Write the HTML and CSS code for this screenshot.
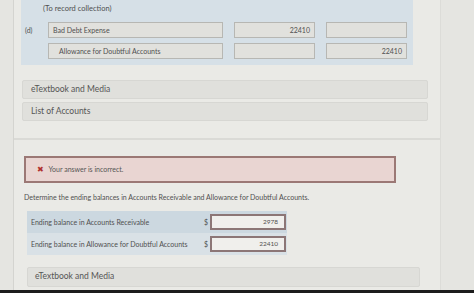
FILE: index.html
```html
<!DOCTYPE html>
<html lang="en">
<head>
  <meta charset="UTF-8">
  <title>Journal Entry</title>
  <link rel="stylesheet" href="styles.css">
</head>
<body>
  <div class="page">
    <div class="section top">
      <div class="entry">
        <div class="entry-title">(To record collection)</div>
        <div class="entry-row">
          <span class="entry-label">(d)</span>
          <div class="field account">Bad Debt Expense</div>
          <div class="field amount">22410</div>
          <div class="field amount"></div>
        </div>
        <div class="entry-row">
          <span class="entry-label"></span>
          <div class="field account indent">Allowance for Doubtful Accounts</div>
          <div class="field amount"></div>
          <div class="field amount">22410</div>
        </div>
      </div>
      <div class="link-bar">eTextbook and Media</div>
      <div class="link-bar">List of Accounts</div>
    </div>

    <div class="section bottom">
      <div class="error-box">
        <span class="error-x">&#10006;</span>
        Your answer is incorrect.
      </div>
      <p class="question">Determine the ending balances in Accounts Receivable and Allowance for Doubtful Accounts.</p>
      <div class="balances">
        <div class="balance-row dark">
          <span class="balance-label">Ending balance in Accounts Receivable</span>
          <span class="dollar">$</span>
          <div class="answer">2978</div>
        </div>
        <div class="balance-row">
          <span class="balance-label">Ending balance in Allowance for Doubtful Accounts</span>
          <span class="dollar">$</span>
          <div class="answer">22410</div>
        </div>
      </div>
      <div class="link-bar wide">eTextbook and Media</div>
    </div>
  </div>
</body>
</html>
```

FILE: styles.css
```css
body {
  margin: 0;
  background: #e5e5e1;
  font-family: Lato, "Open Sans", sans-serif;
  color: #505050;
  height: 293px;
  overflow: hidden;
  border-bottom: 3px solid #1c1c1c;
  box-sizing: border-box;
}
.page {
  width: 426px;
  margin-left: 13px;
  background: #eaeae6;
  border-left: 1px solid #d4d4d0;
  border-right: 1px solid #dcdcd8;
  height: 290px;
}
.section.top {
  height: 140px;
  padding-left: 7px;
  border-bottom: 2px solid #dadad6;
  box-sizing: border-box;
}
.entry {
  width: 392px;
  height: 65px;
  background: #d6e0e7;
  box-sizing: border-box;
  padding-top: 3px;
}
.entry-title {
  font-size: 7.5px;
  padding-left: 22px;
  height: 16px;
  line-height: 11px;
}
.entry-row {
  display: flex;
  align-items: center;
  gap: 11px;
  margin-top: 3px;
  margin-bottom: 5px;
}
.entry-label {
  padding-left: 4px;
  font-size: 7px;
  margin-right: -11px;
  flex: none;
  width: 23px;
}
.field {
  height: 16px;
  box-sizing: border-box;
  background: #e1e1dd;
  border: 1px solid #b7b7b3;
  font-size: 7px;
  line-height: 14px;
  padding: 0 4px;
}
.field.account {
  width: 175px;
}
.field.indent {
  padding-left: 10px;
}
.field.amount {
  width: 81px;
  text-align: right;
}
.link-bar {
  width: 406px;
  height: 19px;
  margin-left: 1px;
  margin-top: 3px;
  background: #e0e0dc;
  border: 1px solid #d7d7d3;
  border-radius: 2px;
  box-sizing: border-box;
  font-size: 8.5px;
  line-height: 17px;
  padding-left: 8px;
  color: #555;
}
.entry + .link-bar {
  margin-top: 15px;
}
.section.bottom {
  padding-top: 16px;
  padding-left: 10px;
}
.error-box {
  width: 372px;
  height: 27px;
  box-sizing: border-box;
  background: #e9d5d2;
  border: 2px solid #9b7875;
  font-size: 7px;
  line-height: 23px;
  padding-left: 11px;
  color: #555;
}
.error-x {
  color: #b0302c;
  font-size: 8px;
  margin-right: 3px;
}
.question {
  font-size: 7px;
  margin: 10px 0 9px 0;
  line-height: 9px;
}
.balances {
  width: 260px;
  margin-left: 3px;
  background: #d9e1e6;
}
.balance-row {
  display: flex;
  align-items: center;
  height: 22px;
  padding-left: 4px;
  font-size: 7px;
}
.balance-row.dark {
  background: #ccd8e0;
}
.balance-label {
  width: 173px;
}
.dollar {
  width: 6px;
}
.answer {
  width: 76px;
  height: 16px;
  box-sizing: border-box;
  background: #f0efec;
  border: 2px solid #8c7676;
  text-align: right;
  font-size: 6.5px;
  line-height: 12px;
  padding-right: 6px;
}
.link-bar.wide {
  width: 393px;
  margin-left: 3px;
  margin-top: 12px;
  height: 20px;
  padding-left: 7px;
}
```
